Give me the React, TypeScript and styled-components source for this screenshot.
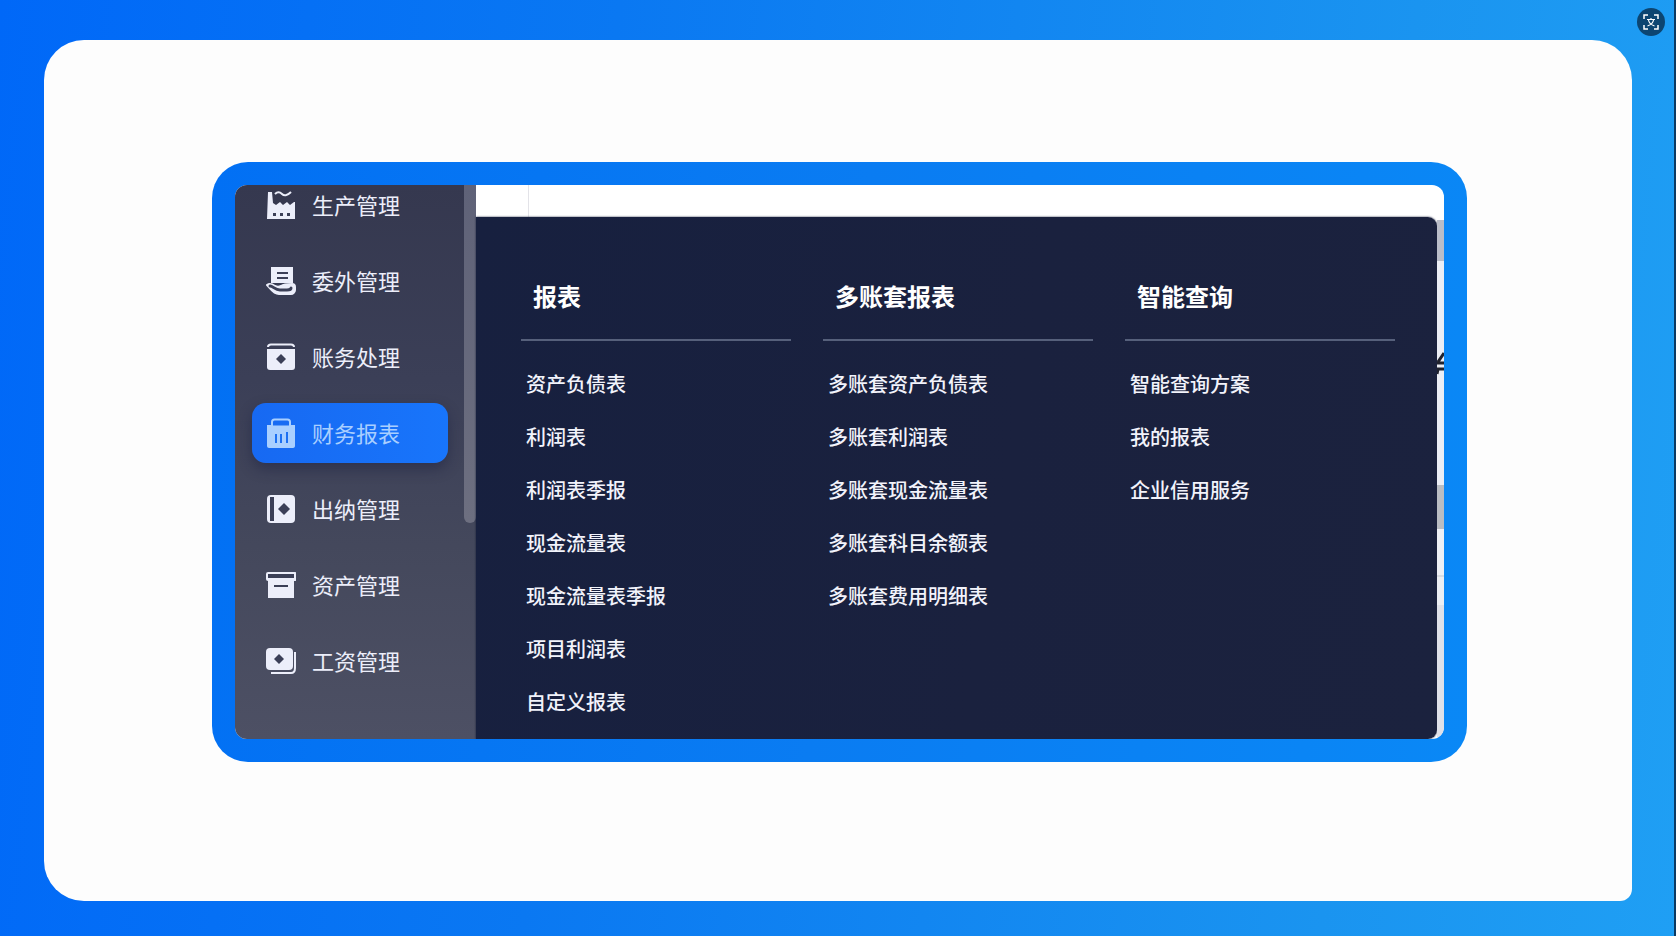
import React from "react";
import styled, { createGlobalStyle, css } from "styled-components";

const Global = createGlobalStyle`
  *, *::before, *::after { box-sizing: border-box; }
  body {
    margin: 0;
    font-family: "Noto Sans", "Noto Sans CJK SC", sans-serif;
  }
  button { font-family: inherit; }
`;

const Page = styled.div`
  position: relative;
  display: flex;
  min-height: 100vh;
  padding: 40px 42px 35px 44px;
  border-right: 2px solid #0b3a63;
  background: linear-gradient(96deg, #0068f8 0%, #0a78f2 35%, #1a94f0 80%, #1f9ff4 100%);
`;

const Card = styled.main`
  flex: 1;
  min-width: 0;
  padding: 122px 165px 139px 168px;
  border-radius: 40px 40px 12px 40px;
  background: #fdfdfd;
`;

const Frame = styled.section`
  padding: 23px;
  border-radius: 36px;
  background: linear-gradient(96deg, #0270f4 0%, #0a7cf2 50%, #0a88f6 100%);
`;

const Screen = styled.div`
  display: flex;
  overflow: hidden;
  border-radius: 12px;
  background: #fff;
`;

const Sidebar = styled.nav`
  display: flex;
  width: 241px;
  flex: none;
  background: linear-gradient(180deg, #35384f 0%, #3b3f57 35%, #44485c 65%, #4d5064 100%);
`;

const SideList = styled.ul`
  display: flex;
  flex: 1;
  flex-direction: column;
  gap: 16px;
  margin: -10px 0 0;
  padding: 0 16px 0 17px;
  list-style: none;
`;

const SideButton = styled.button<{ $active?: boolean }>`
  display: flex;
  align-items: center;
  gap: 16px;
  width: 100%;
  height: 60px;
  padding: 0 14px;
  border: 0;
  border-radius: 14px;
  background: none;
  color: #eceefa;
  font-size: 22px;
  line-height: 32px;
  white-space: nowrap;
  cursor: pointer;
  ${(p) =>
    p.$active &&
    css`
      background: linear-gradient(90deg, #1769f2, #1875fb);
      color: #a9cfff;
      box-shadow: 0 6px 14px rgba(24, 28, 62, 0.45);
    `}
`;

const Icon = styled.svg`
  flex: none;
  width: 30px;
  height: 30px;
`;

const ScrollThumb = styled.div`
  flex: none;
  width: 12px;
  height: 338px;
  border-radius: 0 0 6px 6px;
  background: linear-gradient(180deg, #5f6278, #6d6f80);
`;

const Content = styled.div`
  display: flex;
  flex: 1;
  min-width: 0;
  flex-direction: column;
`;

const TopStrip = styled.div`
  height: 32px;
  width: 53px;
  border-right: 1px solid #e3e3e8;
`;

const Row = styled.div`
  display: flex;
  flex: 1;
`;

const Menu = styled.div`
  display: grid;
  flex: 1;
  min-width: 0;
  grid-template-columns: repeat(3, minmax(0, 1fr));
  gap: 32px;
  padding: 56px 42px 9px 45px;
  border-radius: 0 9px 9px 0;
  background: linear-gradient(100deg, #17203f 0%, #1a213e 55%, #1b223e 100%);
  box-shadow: 0 0 2px #0d1330;
`;

const GroupTitle = styled.h2`
  margin: 0 0 17px;
  padding: 6px 12px 24px;
  border-bottom: 2px solid #56607b;
  color: #fff;
  font-size: 24px;
  font-weight: 700;
  line-height: 36px;
  white-space: nowrap;
`;

const LinkList = styled.ul`
  margin: 0;
  padding: 0 5px 1px;
  list-style: none;
`;

const MenuLink = styled.a`
  display: block;
  color: #f2f3fb;
  font-size: 20px;
  font-weight: 500;
  line-height: 53px;
  text-decoration: none;
  white-space: nowrap;
`;

const Edge = styled.div`
  display: flex;
  flex: none;
  width: 7px;
  flex-direction: column;
  padding-top: 3px;
`;

const EdgeBlock = styled.div<{ $height?: number; $color: string }>`
  flex: ${(p) => (p.$height ? "none" : "1")};
  height: ${(p) => (p.$height ? p.$height + "px" : "auto")};
  background: ${(p) => p.$color};
`;

const EdgeMark = styled.svg`
  display: block;
  width: 7px;
  height: 24px;
`;

const ScanButton = styled.button`
  position: absolute;
  top: 8px;
  right: 9px;
  display: grid;
  place-items: center;
  width: 28px;
  height: 28px;
  padding: 0;
  border: 0;
  border-radius: 50%;
  background: #0c4571;
  cursor: pointer;
`;

const ink = "#3b3f57";

const icons: Record<string, React.ReactNode> = {
  factory: (
    <>
      <path fill="currentColor" d="M2 2h4l1 11 3 2 4-3 3 3 4-3 3 3 4-3h1v17H1z" />
      <path d="M9 4c3-3 5-2 7 0s5 2 9-2" fill="none" stroke="currentColor" strokeWidth="2" />
      <path d="M7 23h3v3H7zM14 23h3v3h-3zM21 23h3v3h-3z" fill={ink} />
    </>
  ),
  hand: (
    <>
      <path fill="currentColor" d="M5 1h22v16H5z" />
      <path d="M11 7h11M11 12h11" stroke={ink} strokeWidth="2" />
      <path
        d="M1 19c3-2 5-1 8 1 2 1 4 1 6 0 3-2 7-2 11-2 2 0 3 1 3 3v3c0 2-2 4-4 4H13C7 28 5 23 1 19z"
        fill="currentColor"
        stroke="currentColor"
        strokeWidth="2"
        strokeLinejoin="round"
      />
      <path d="M4 20c3 0 5 4 10 4h7c3 0 4-1 4-2" fill="none" stroke={ink} strokeWidth="3" strokeLinecap="round" />
    </>
  ),
  ledger: (
    <>
      <path d="M2 5c0-2 1-2.500 3-2.500h20c2 0 3 .5 3 2.500" fill="none" stroke="currentColor" strokeWidth="2" />
      <path fill="currentColor" d="M1 7h28v18c0 2-1 3-3 3H4c-2 0-3-1-3-3z" />
      <path d="M15 12l5 5-5 5-5-5z" fill={ink} />
    </>
  ),
  report: (
    <>
      <path d="M6 8V4c0-2 1-2.500 2.500-2.500h13C23 1.500 24 2 24 4v4" fill="none" stroke="currentColor" strokeWidth="2" />
      <path fill="currentColor" d="M1 7h28v21c0 1-1 2-2 2H3c-1 0-2-1-2-2z" />
      <path d="M10 16v9M15 16v9M21 14v11" stroke="#1c6ff2" strokeWidth="2" />
      <path d="M7 7h16" stroke="#1c6ff2" strokeWidth="1" />
    </>
  ),
  book: (
    <>
      <rect x="1" y="1" width="28" height="28" rx="4" fill="currentColor" />
      <path d="M4 3h4v24H4z" fill={ink} />
      <path d="M18 9l6 6-6 6-6-6z" fill={ink} />
    </>
  ),
  archive: (
    <>
      <rect x="0" y="2" width="31" height="9" rx="2" fill="currentColor" />
      <path fill="currentColor" d="M2 10h26v18H2z" />
      <path d="M2 4h26v4H2zM8 15h14v2H8z" fill={ink} />
    </>
  ),
  salary: (
    <>
      <rect x="0" y="2" width="27" height="22" rx="4" fill="currentColor" />
      <path d="M13 8l5 5-5 5-5-5z" fill={ink} />
      <path d="M29 6v16c0 3-1 5-4 5H5" fill="none" stroke="currentColor" strokeWidth="2" />
    </>
  ),
};

const modules = [
  { label: "生产管理", icon: "factory" },
  { label: "委外管理", icon: "hand" },
  { label: "账务处理", icon: "ledger" },
  { label: "财务报表", icon: "report", active: true },
  { label: "出纳管理", icon: "book" },
  { label: "资产管理", icon: "archive" },
  { label: "工资管理", icon: "salary" },
];

const groups = [
  {
    title: "报表",
    items: ["资产负债表", "利润表", "利润表季报", "现金流量表", "现金流量表季报", "项目利润表", "自定义报表"],
  },
  {
    title: "多账套报表",
    items: ["多账套资产负债表", "多账套利润表", "多账套现金流量表", "多账套科目余额表", "多账套费用明细表"],
  },
  { title: "智能查询", items: ["智能查询方案", "我的报表", "企业信用服务"] },
];

export default function App() {
  return (
    <Page>
      <Global />
      <Card>
        <Frame>
          <Screen>
            <Sidebar>
              <SideList>
                {modules.map((m) => (
                  <li key={m.label}>
                    <SideButton type="button" $active={m.active}>
                      <Icon viewBox="0 0 30 30" aria-hidden="true">{icons[m.icon]}</Icon>
                      {m.label}
                    </SideButton>
                  </li>
                ))}
              </SideList>
              <ScrollThumb />
            </Sidebar>
            <Content>
              <TopStrip />
              <Row>
                <Menu>
                  {groups.map((g) => (
                    <div key={g.title}>
                      <GroupTitle>{g.title}</GroupTitle>
                      <LinkList>
                        {g.items.map((item) => (
                          <li key={item}>
                            <MenuLink href="#">{item}</MenuLink>
                          </li>
                        ))}
                      </LinkList>
                    </div>
                  ))}
                </Menu>
                <Edge aria-hidden="true">
                  <EdgeBlock $height={41} $color="#babdc8" />
                  <EdgeBlock $height={90} $color="#eceef5" />
                  <EdgeBlock $height={24} $color="#eceef5">
                    <EdgeMark viewBox="0 0 7 24">
                      <path d="M7 2L1 11M0 12h7M0 18h7M1 18l-1 5" fill="none" stroke="#20222e" strokeWidth="3" />
                    </EdgeMark>
                  </EdgeBlock>
                  <EdgeBlock $height={110} $color="#eceef5" />
                  <EdgeBlock $height={44} $color="#b9bcc2" />
                  <EdgeBlock $height={46} $color="#eff0f5" />
                  <EdgeBlock $height={2} $color="#d9dce2" />
                  <EdgeBlock $height={28} $color="#eceef3" />
                  <EdgeBlock $color="#dfe1e9" />
                </Edge>
              </Row>
            </Content>
          </Screen>
        </Frame>
      </Card>
      <ScanButton type="button" aria-label="识别图中文字">
        <svg width="16" height="16" viewBox="0 0 16 16" fill="none" stroke="#fff" strokeWidth="1.500" aria-hidden="true">
          <path d="M1 5V1h4M11 1h4v4M15 11v4h-4M5 15H1v-4" />
          <path d="M4 5.500h8M8 4v1.500M5.500 6c.5 3 3 5 6 6M10.500 6c-.5 3-3 5-6 6" strokeWidth="1.200" />
        </svg>
      </ScanButton>
    </Page>
  );
}
